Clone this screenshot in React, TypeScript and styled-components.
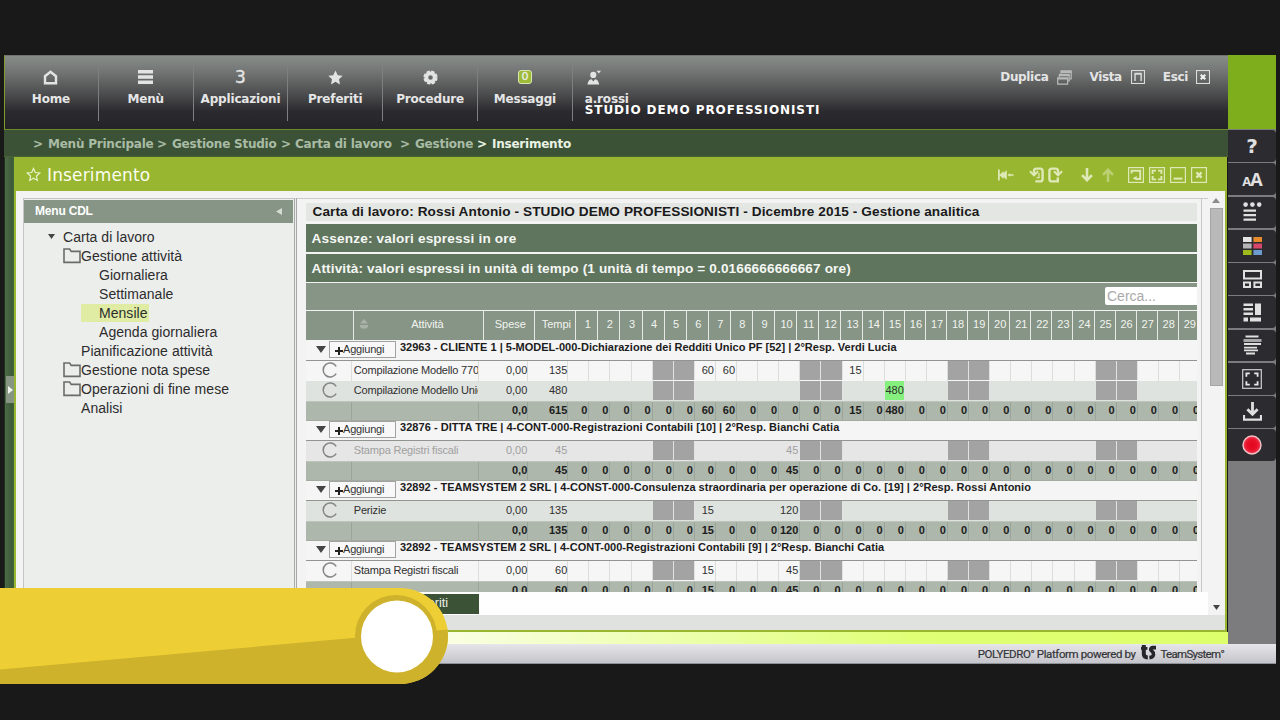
import React from "react";
import styled, { createGlobalStyle, css } from "styled-components";

const GlobalStyle = createGlobalStyle`
  * { box-sizing: border-box; }
  html, body { margin: 0; padding: 0; background: #191919; }
  body { width: 1280px; height: 720px; overflow: hidden; font-family: "Liberation Sans", Arial, sans-serif; }
  svg { display: block; flex: none; }
`;

const wide = css`font-family: "DejaVu Sans", Verdana, sans-serif;`;

const Screen = styled.div`
  position: relative;
  width: 1280px;
  height: 720px;
  padding: 55px 4px 56px 4px;
  background: #191919;
  overflow: hidden;
`;
const Frame = styled.div`
  display: flex;
  flex-direction: column;
  height: 609px;
`;
const Upper = styled.div`
  display: flex;
  height: 589px;
`;
const Workspace = styled.div`
  display: flex;
  flex-direction: column;
  width: 1224px;
`;

/* top bar */
const TopBar = styled.header`
  display: flex;
  justify-content: space-between;
  height: 75px;
  border-top: 1px solid #6f736f;
  border-bottom: 1px solid #6d8c28;
  border-left: 1px solid #7f9c2c;
  background: linear-gradient(#878c89 0%, #6f7271 24%, #4c4d4e 52%, #2b2a2e 76%, #242327 100%);
`;
const Nav = styled.nav`
  display: flex;
  margin-left: -1px;
  padding-top: 8px;
`;
const NavItem = styled.div`
  display: flex;
  flex-direction: column;
  align-items: center;
  width: 94.8px;
  height: 57px;
  padding-top: 4px;
  border-right: 1px solid #7d807e;
`;
const NavIcon = styled.div`
  display: flex;
  align-items: center;
  justify-content: center;
  height: 18px;
  color: #e3e3e3;
  ${wide}
  font-size: 17px;
  line-height: 18px;
  -webkit-text-stroke: 0.4px #e3e3e3;
`;
const NavLabel = styled.div`
  ${wide}
  margin-top: 4px;
  font-size: 12px;
  font-weight: 700;
  line-height: 18px;
  letter-spacing: -0.17px;
  color: #e6e6e6;
  white-space: nowrap;
`;
const UserBlock = styled.div`
  display: flex;
  flex-direction: column;
  padding: 4px 0 0 12px;
`;
const UserIconBox = styled.div`
  display: flex;
  align-items: center;
  height: 18px;
  padding-left: 2px;
`;
const Studio = styled.div`
  ${wide}
  margin-top: -7px;
  font-size: 12px;
  font-weight: 700;
  line-height: 18px;
  letter-spacing: 0.92px;
  color: #fff;
  white-space: nowrap;
`;
const Badge = styled.span`
  display: block;
  width: 14px;
  height: 14px;
  border: 1px solid #dbe6b4;
  border-radius: 3px;
  background: #9dbb35;
  ${wide}
  font-size: 11px;
  line-height: 12px;
  text-align: center;
  color: #f4f8e0;
`;
const WindowLinks = styled.div`
  display: flex;
  align-items: center;
  height: 18px;
  margin: 12px 18px 0 0;
`;
const WindowLink = styled.div<{ $gap: number; $ml: number }>`
  ${wide}
  display: flex;
  align-items: center;
  gap: ${(p) => p.$gap}px;
  margin-left: ${(p) => p.$ml}px;
  font-size: 12px;
  font-weight: 700;
  letter-spacing: -0.35px;
  color: #e4e4e4;
`;

/* breadcrumb */
const Crumbs = styled.div`
  ${wide}
  display: flex;
  align-items: center;
  height: 27px;
  padding: 1px 0 0 29px;
  background: #3b5236;
  border-bottom: 1px solid #486032;
  font-size: 12px;
  font-weight: 700;
  color: #a9bba5;
  white-space: pre;
`;
const Crumb = styled.span<{ $w: number; $on?: boolean }>`
  width: ${(p) => p.$w}px;
  letter-spacing: -0.23px;
  color: ${(p) => (p.$on ? "#e9f2e4" : "#a9bba5")};
`;

/* window */
const Body = styled.div`
  display: flex;
  height: 475px;
`;
const LeftStrip = styled.div`
  display: flex;
  flex-direction: column;
  width: 10px;
  padding: 219px 0 0 1px;
  border-left: 1px solid #20301f;
  background: linear-gradient(90deg, #4d6a48, #3c5a38 80%, #44653a);
`;
const Handle = styled.div`
  display: flex;
  align-items: center;
  justify-content: center;
  height: 27px;
  background: #879683;
`;
const Window = styled.section`
  display: flex;
  flex-direction: column;
  width: 1213px;
  border: 2px solid #98b62f;
  border-top: 0;
`;
const WindowTitle = styled.div`
  ${wide}
  display: flex;
  align-items: center;
  justify-content: space-between;
  height: 34px;
  padding: 1px 18px 0 10px;
  background: #98b62f;
  color: #fbfdf0;
  font-size: 17px;
`;
const TitleName = styled.div`
  display: flex;
  align-items: center;
  gap: 6px;
  letter-spacing: 0.15px;
`;
const Tools = styled.div`
  display: flex;
  align-items: center;
`;
const Tool = styled.span<{ $ml?: number; $dim?: boolean }>`
  margin-left: ${(p) => p.$ml ?? 0}px;
  opacity: ${(p) => (p.$dim ? 0.5 : 1)};
`;
const Sheet = styled.div`
  display: flex;
  height: 424px;
  padding: 7px 0 0 7px;
  background: #f2f3f2;
`;
const SheetFoot = styled.div`
  height: 15px;
  background: #e0e2e0;
`;

/* tree */
const Panel = styled.aside`
  width: 274px;
  border: 1px solid #c2c5c2;
  border-right: 3px double #a6a9a6;
  border-bottom: 0;
  padding-top: 1px;
  padding-right: 1px;
  background: #eceeec;
`;
const PanelHead = styled.div`
  display: flex;
  align-items: center;
  justify-content: space-between;
  height: 23px;
  padding: 0 11px 1px 11px;
  background: #869585;
  color: #fff;
  font-size: 12px;
  font-weight: 700;
  letter-spacing: -0.2px;
`;
const Tree = styled.div`
  display: flex;
  flex-direction: column;
  align-items: flex-start;
  padding-top: 4px;
`;
const Node = styled.div<{ $ml: number; $pl?: number; $on?: boolean }>`
  display: flex;
  align-items: center;
  height: 19px;
  margin-left: ${(p) => p.$ml}px;
  padding-left: ${(p) => p.$pl ?? 0}px;
  padding-right: 1px;
  background: ${(p) => (p.$on ? "linear-gradient(#e0eca4,#e0eca4) 0 50% / 100% 18px no-repeat" : "none")};
  font-size: 14px;
  letter-spacing: 0.04px;
  color: #2c2c2c;
  white-space: nowrap;
`;

/* main */
const Main = styled.main`
  width: 911px;
  border-top: 1px solid #c9cbc9;
  display: flex;
  flex-direction: column;
`;
const Card = styled.div`
  width: 905px;
  height: 393px;
  padding: 4px 4px 0 9px;
  border-right: 1px solid #c6c8c6;
  overflow: hidden;
`;
const Heading = styled.h1`
  margin: 0;
  height: 18px;
  padding-left: 6.5px;
  background: #e3e6e3;
  font-size: 13.6px;
  line-height: 18px;
  letter-spacing: 0.1px;
  font-weight: 700;
  color: #1a1a1a;
  white-space: nowrap;
`;
const Section = styled.h2<{ $mt: number; $ls: number }>`
  margin: ${(p) => p.$mt}px 0 0;
  height: 28px;
  padding-left: 5.5px;
  background: #5f755d;
  font-size: 13.6px;
  line-height: 29px;
  letter-spacing: ${(p) => p.$ls}px;
  font-weight: 700;
  color: #f5f7f4;
  white-space: nowrap;
`;
const SearchRow = styled.div`
  display: flex;
  justify-content: flex-end;
  align-items: center;
  height: 27px;
  margin-top: 1px;
  padding-bottom: 1px;
  background: #869585;
`;
const Search = styled.div`
  width: 92px;
  height: 18px;
  padding-left: 2px;
  border-radius: 2px 0 0 2px;
  background: #fff;
  font-size: 14px;
  line-height: 18px;
  letter-spacing: 0;
  color: #a9a9a9;
`;
const HeadRow = styled.div`
  display: grid;
  grid-template-columns: 48.3px 130px 51px 41px repeat(12, 22.08px) 21.6px repeat(16, 21.07px);
  height: 29px;
  margin-top: 1px;
  overflow: hidden;
  background: #869585;
`;
const Th = styled.div`
  display: flex;
  align-items: center;
  justify-content: center;
  border-right: 1px solid #e6eae5;
  font-size: 11px;
  padding: 0 0 3px 2px;
  color: #f2f4f1;
`;
const ThActivity = styled(Th)`
  justify-content: flex-start;
  gap: 43px;
  padding-left: 6px;
  letter-spacing: -0.1px;
`;
const Group = styled.div<{ $first?: boolean }>`
  display: flex;
  align-items: flex-start;
  height: ${(p) => (p.$first ? 21 : 20)}px;
  padding-left: 9px;
  background: #f5f5f5;
  border-bottom: 1px solid #909590;
  border-top: ${(p) => (p.$first ? "1px solid #f5f5f5" : "0")};
`;
const Caret = styled.div`
  width: 14px;
  padding: 5px 0 0 1px;
`;
const AddButton = styled.div`
  display: flex;
  align-items: center;
  width: 67px;
  height: 17px;
  padding: 0 0 2px 5px;
  border: 1px solid #a2a2a2;
  background: #f8f8f8;
  font-size: 11px;
  letter-spacing: -0.2px;
  color: #333;
`;
const PlusBox = styled.span`
  padding-top: 4px;
`;
const GroupName = styled.div<{ $ls: number }>`
  margin-left: 4px;
  font-size: 11px;
  line-height: 13px;
  letter-spacing: ${(p) => p.$ls}px;
  font-weight: 700;
  color: #1c1c1c;
  white-space: nowrap;
`;
const columns = css`
  display: grid;
  grid-template-columns: 46.3px 127px 49px 40px repeat(30, 21.1px);
  height: 20px;
  overflow: hidden;
`;
type Tone = "white" | "green" | "gray";
const toneBg = { white: "#f6f6f6", green: "#dfe3df", gray: "#e6e6e6" };
const toneLine = { white: "#dcdedc", green: "transparent", gray: "transparent" };
const Row = styled.div<{ $tone: Tone }>`
  ${columns}
  background: ${(p) => toneBg[p.$tone]};
  color: ${(p) => (p.$tone === "gray" ? "#a0a0a0" : "#303030")};
  --line: ${(p) => toneLine[p.$tone]};
`;
const Total = styled.div`
  ${columns}
  background: #aeb7ac;
  color: #1c1c1c;
  font-weight: 700;
  border-top: 1px solid #bdc5bb;
  border-bottom: 1px solid #a3aba1;
  --line: #9ba599;
`;
const Cell = styled.div`
  border-right: 1px solid var(--line);
  padding-right: 1px;
  font-size: 11px;
  line-height: 19px;
  text-align: right;
  white-space: nowrap;
`;
const SumCell = styled(Cell)`
  padding-right: 0;
`;
const TotalCell = styled(Cell)<{ $wide?: boolean }>`
  padding-right: ${(p) => (p.$wide ? 0 : 1)}px;
  line-height: 17px;
`;
const NameCell = styled(Cell)`
  padding: 0 0 0 1.5px;
  text-align: left;
  letter-spacing: -0.19px;
  overflow: hidden;
`;
const MarkCell = styled(Cell)`
  display: flex;
  align-items: center;
  padding: 0 0 2px 16px;
`;
const Weekend = styled(Cell)`
  margin-bottom: 1px;
  background: #a3a3a3;
  border-right: 1px solid #e2e2e2;
`;
const Hot = styled(Cell)`
  margin: 0 2px 1px 0;
  padding: 0;
  border: 0;
  background: #86f07f;
`;
const Actions = styled.div`
  display: flex;
  height: 23px;
  padding: 2px 0 0 70px;
  background: #fefefe;
`;
const ActionButton = styled.div`
  width: 112px;
  height: 20px;
  padding-right: 31px;
  background: #3b5236;
  color: #eef2ec;
  font-size: 12.5px;
  line-height: 19px;
  text-align: right;
`;
const Scroll = styled.div`
  display: flex;
  flex-direction: column;
  align-items: center;
  width: 16px;
  padding: 0 0 5px;
`;
const Thumb = styled.div`
  width: 13px;
  height: 178px;
  margin: 5px 0 auto;
  border: 1px solid #a5a5a5;
  background: #b9b9b9;
`;
const Glow = styled.div`
  height: 12px;
  background: linear-gradient(90deg, #ffffff 25%, #f9ffe0 37%, #dfff74 75%, #deff6c);
`;

/* right rail */
const Rail = styled.aside`
  display: flex;
  flex-direction: column;
  width: 48px;
  background: #7c7b7e;
`;
const RailTop = styled.div`
  height: 74px;
  margin-bottom: 1px;
  background: #7eae1b;
`;
const RailButtons = styled.div`
  display: grid;
  grid-template-rows: repeat(10, 1fr);
  gap: 1.5px;
  height: 331px;
`;
const RailButton = styled.div`
  display: flex;
  align-items: center;
  justify-content: center;
  border-radius: 0 4px 4px 0;
  background: #2c2b2f;
  color: #e0e0e0;
  font-size: 20px;
  font-weight: 700;
`;
const BigA = styled.span`
  display: flex;
  align-items: baseline;
  font-family: "Open Sans", sans-serif;
  font-size: 18px;
  letter-spacing: -1px;
`;
const SmallA = styled.span`
  font-size: 13px;
`;
const Help = styled.span`
  font-family: "DejaVu Sans", sans-serif;
`;

/* footer */
const Footer = styled.footer`
  display: flex;
  align-items: center;
  justify-content: flex-end;
  height: 20px;
  padding-right: 52px;
  border-bottom: 1px solid #8d9298;
  background: linear-gradient(#e6e6ea, #c4c4ca);
  font-family: Roboto, sans-serif;
  font-size: 11.5px;
  color: #343438;
`;
const FootText = styled.span<{ $ls: number }>`
  margin-top: 1px;
  letter-spacing: ${(p) => p.$ls}px;
  -webkit-text-stroke: 0.2px #343438;
`;
const LogoBox = styled.span`
  margin: 0 5px 2px 5px;
`;

const Overlay = styled.div`
  position: absolute;
  left: 0;
  top: 588px;
`;

const C = "#e3e3e3";
const L = "#dfe9b8";

const Box = ({ children, color = L, s = 16 }: { children?: React.ReactNode; color?: string; s?: number }) => (
  <svg width={s} height={s} viewBox="0 0 16 16" fill="none" stroke={color}>
    <rect x="0.6" y="0.6" width="14.8" height="14.8" strokeWidth="1.2" />
    {children}
  </svg>
);
const Corners = ({ color, a, b, w }: { color: string; a: number; b: number; w: number }) => (
  <path
    d={`M${a} ${a + 3.4}V${a}H${a + 3.4}M${b - 3.4} ${a}H${b}V${a + 3.4}M${b} ${b - 3.4}V${b}H${b - 3.4}M${a + 3.4} ${b}H${a}V${b - 3.4}`}
    stroke={color}
    strokeWidth={w}
    fill="none"
  />
);

const HomeIcon = () => (
  <svg width="15" height="15" viewBox="0 0 15 15" fill="none" stroke={C} strokeWidth="2.4">
    <path d="M2 13.2V6.2L7.5 1.8L13 6.2V13.2Z" />
  </svg>
);
const MenuIcon = () => (
  <svg width="15" height="14" viewBox="0 0 15 14" fill={C}>
    <path d="M0 0H15V3.6H0ZM0 5.2H15V8.8H0ZM0 10.4H15V14H0Z" />
  </svg>
);
const StarIcon = () => (
  <svg width="15" height="15" viewBox="0 0 15 15" fill={C}>
    <path d="M7.5 0.4L9.7 5.2L14.7 5.8L11 9.2L12 14.4L7.5 11.8L3 14.4L4 9.2L0.3 5.8L5.3 5.2Z" />
  </svg>
);
const GearIcon = () => (
  <svg width="15" height="15" viewBox="0 0 15 15" fill="none" stroke={C}>
    <circle cx="7.5" cy="7.5" r="4.2" strokeWidth="3.8" />
    <circle cx="7.5" cy="7.5" r="6.2" strokeWidth="1.8" strokeDasharray="3.4 1.47" />
  </svg>
);
const UserIcon = () => (
  <svg width="15" height="15" viewBox="0 0 15 15" fill={C}>
    <circle cx="6.3" cy="4.9" r="3.1" />
    <path d="M0.3 14.4L1.6 11Q2.4 9.4 4.6 9.2L6.3 11.4L8 9.2Q10.2 9.4 11 11L12.3 14.4Z" />
    <path d="M9.6 0.8H14L11.8 3.6Z" />
  </svg>
);
const DuplicaIcon = () => (
  <svg width="15" height="15" viewBox="0 0 15 15" fill="none" stroke="#b9bbba" strokeWidth="1.2">
    <path d="M4 3.6V0.8H14.2V9H11.6M4 2.4H14.2M4 1.4H14" />
    <path d="M2.4 7V4.4H12.2V11H11M2.4 5.6H12" />
    <path d="M0.7 7.8H10.6V14.2H0.7ZM0.7 9H10.6" />
  </svg>
);

const ToolStart = () => (
  <svg width="16" height="12" viewBox="0 0 16 12" fill={L}>
    <path d="M0 0.5H1.8V11.5H0ZM1.4 6L5.4 2V4L8.8 1.2V10.8L5.4 8V10ZM9.5 6L12 4.2V5.2H15.5V6.8H12V7.8Z" />
  </svg>
);
const ToolUndo = () => (
  <svg width="15" height="16" viewBox="0 0 15 16" fill="none" stroke={L} strokeWidth="2.4">
    <path d="M5 7.5V4Q5 1.6 7.4 1.6H11.2Q13.6 1.6 13.6 4V12Q13.6 14.4 11.2 14.4H6.4" />
    <path d="M0.9 4.2L5 8.4L9.1 4.2" strokeWidth="2" />
    <path d="M10 6V10.6H7.6" strokeWidth="1.2" />
  </svg>
);
const ToolRedo = () => (
  <svg width="15" height="16" viewBox="0 0 15 16" fill="none" stroke={L} strokeWidth="2.4">
    <path d="M10 7.5V4Q10 1.6 7.6 1.6H3.8Q1.4 1.6 1.4 4V12Q1.4 14.4 3.8 14.4H9.8V10.4" />
    <path d="M5.9 4.2L10 8.4L14.1 4.2" strokeWidth="2" />
  </svg>
);
const ToolDown = () => (
  <svg width="12" height="14" viewBox="0 0 12 14" fill="none" stroke={L} strokeWidth="2.6">
    <path d="M6 0V12M1 7.2L6 12.2L11 7.2" />
  </svg>
);
const ToolUp = () => (
  <svg width="12" height="14" viewBox="0 0 12 14" fill="none" stroke={L} strokeWidth="2.6">
    <path d="M6 14V2M1 6.8L6 1.8L11 6.8" />
  </svg>
);

const Folder = () => (
  <svg width="18" height="16" viewBox="0 0 18 16" fill="none" stroke="#6a6c6a" strokeWidth="1.6">
    <path d="M1 14.4V1H6.6L8.2 3.4H17V14.4Z" />
  </svg>
);
const Down = ({ s = 8, c = "#444" }: { s?: number; c?: string }) => (
  <svg width={s} height={s * 0.7} viewBox="0 0 10 7" fill={c}>
    <path d="M0 0H10L5 7Z" />
  </svg>
);

const RailLines = () => (
  <svg width="19" height="20" viewBox="0 0 19 20" fill="#e0e0e0">
    <circle cx="2.6" cy="2.6" r="2.3" />
    <circle cx="9.4" cy="2.6" r="2.3" />
    <circle cx="16.2" cy="2.6" r="2.3" />
    <path d="M0.5 7.4H13V9.8H0.5ZM0.5 11.9H13V14.3H0.5ZM0.5 16.4H13V18.8H0.5Z" />
  </svg>
);
const RailColors = () => (
  <svg width="19" height="18" viewBox="0 0 19 18">
    <path fill="#e4e4e4" d="M0 0H8.6V5H0Z" />
    <path fill="#e78a2c" d="M10.4 0H19V5H10.4Z" />
    <path fill="#b5b5b7" d="M0 6.5H8.6V11.5H0Z" />
    <path fill="#d6476b" d="M10.4 6.5H19V11.5H10.4Z" />
    <path fill="#9dbb1c" d="M0 13H8.6V18H0Z" />
    <path fill="#6d9bd0" d="M10.4 13H19V18H10.4Z" />
  </svg>
);
const RailLayout = () => (
  <svg width="19" height="18" viewBox="0 0 19 18" fill="none" stroke="#e0e0e0" strokeWidth="2">
    <path d="M1 1H18V8.4H1ZM1 12.4H7V17H1ZM11.4 12.4H18V17H11.4Z" />
  </svg>
);
const RailBlocks = () => (
  <svg width="19" height="19" viewBox="0 0 19 19" fill="#e0e0e0">
    <path d="M0.5 0.5H10V3H0.5ZM0.5 5H10V7.5H0.5ZM0.5 9.5H10V12H0.5ZM12 0.5H18V12H12ZM0.5 14.5H5V18.5H0.5ZM7 14.5H18V18.5H7Z" />
  </svg>
);
const RailText = () => (
  <svg width="19" height="20" viewBox="0 0 19 20" fill="#e0e0e0">
    <path d="M2.5 0.5H15.5V2.5H2.5ZM1 8H18V10H1ZM1 11.7H14V13.4H1ZM1 14.6H15V16.3H1ZM3 17.6H12V19.4H3Z" />
    <path d="M0.5 4H18.5V7H0.5Z" fill="#a8a8aa" />
  </svg>
);
const RailExpand = () => (
  <svg width="20" height="20" viewBox="0 0 20 20" fill="none">
    <rect x="0.7" y="0.7" width="18.6" height="18.6" stroke="#d0d0d0" strokeWidth="1.2" />
    <Corners color="#e8e8e8" a={4.4} b={15.6} w={1.8} />
  </svg>
);
const RailDownload = () => (
  <svg width="19" height="19" viewBox="0 0 19 19" fill="none" stroke="#e0e0e0">
    <path d="M9.5 0V11.5M4.4 7.2L9.5 12.2L14.6 7.2" strokeWidth="2.8" />
    <path d="M1 13V17.6H18V13" strokeWidth="2.2" />
  </svg>
);
const RailRecord = () => (
  <svg width="20" height="20" viewBox="0 0 20 20">
    <defs>
      <radialGradient id="rec">
        <stop offset="0" stopColor="#e0061c" />
        <stop offset="0.6" stopColor="#e8112a" />
        <stop offset="1" stopColor="#f4405a" />
      </radialGradient>
    </defs>
    <circle cx="10" cy="10" r="9" fill="url(#rec)" stroke="#f0c4c8" strokeWidth="1.4" />
  </svg>
);

const navItems: { label: string; icon: React.ReactNode }[] = [
  { label: "Home", icon: <HomeIcon /> },
  { label: "Menù", icon: <MenuIcon /> },
  { label: "Applicazioni", icon: "3" },
  { label: "Preferiti", icon: <StarIcon /> },
  { label: "Procedure", icon: <GearIcon /> },
  { label: "Messaggi", icon: <Badge>0</Badge> },
];

const DAYS = Array.from({ length: 30 }, (_, i) => i + 1);
const WEEKEND = [5, 6, 12, 13, 19, 20, 26, 27];
type Values = Record<number, number>;

interface Line {
  name: string;
  tempi: number;
  tone: Tone;
  values: Values;
  hot?: number;
}
interface GroupData {
  title: string;
  ls: number;
  lines: Line[];
  total: number;
  sums: Values;
}

const groups: GroupData[] = [
  {
    title: "32963 - CLIENTE 1 | 5-MODEL-000-Dichiarazione dei Redditi Unico PF [52] | 2°Resp. Verdi Lucia",
    ls: 0,
    lines: [
      { name: "Compilazione Modello 770", tempi: 135, tone: "white", values: { 7: 60, 8: 60, 14: 15 } },
      { name: "Compilazione Modello Unico", tempi: 480, tone: "green", values: { 16: 480 }, hot: 16 },
    ],
    total: 615,
    sums: { 7: 60, 8: 60, 14: 15, 16: 480 },
  },
  {
    title: "32876 - DITTA TRE | 4-CONT-000-Registrazioni Contabili [10] | 2°Resp. Bianchi Catia",
    ls: 0.04,
    lines: [{ name: "Stampa Registri fiscali", tempi: 45, tone: "gray", values: { 11: 45 } }],
    total: 45,
    sums: { 11: 45 },
  },
  {
    title: "32892 - TEAMSYSTEM 2 SRL | 4-CONST-000-Consulenza straordinaria per operazione di Co. [19] | 2°Resp. Rossi Antonio",
    ls: 0.01,
    lines: [{ name: "Perizie", tempi: 135, tone: "green", values: { 7: 15, 11: 120 } }],
    total: 135,
    sums: { 7: 15, 11: 120 },
  },
  {
    title: "32892 - TEAMSYSTEM 2 SRL | 4-CONT-000-Registrazioni Contabili [9] | 2°Resp. Bianchi Catia",
    ls: 0,
    lines: [{ name: "Stampa Registri fiscali", tempi: 60, tone: "white", values: { 7: 15, 11: 45 } }],
    total: 60,
    sums: { 7: 15, 11: 45 },
  },
];

const LineRow = ({ line }: { line: Line }) => (
  <Row $tone={line.tone}>
    <MarkCell>
      <svg width="16" height="16" viewBox="0 0 16 16" fill="none" stroke="#858585" strokeWidth="1.5">
        <path d="M14.2 4.4A7 7 0 1 0 14.2 11.6" />
      </svg>
    </MarkCell>
    <NameCell>{line.name}</NameCell>
    <SumCell>0,00</SumCell>
    <SumCell>{line.tempi}</SumCell>
    {DAYS.map((d) => {
      if (WEEKEND.includes(d)) return <Weekend key={d} />;
      if (line.hot === d) return <Hot key={d}>{line.values[d]}</Hot>;
      return <Cell key={d}>{line.values[d] ?? ""}</Cell>;
    })}
  </Row>
);

const GroupBlock = ({ group, first }: { group: GroupData; first: boolean }) => (
  <>
    <Group $first={first}>
      <Caret>
        <Down s={10} />
      </Caret>
      <AddButton>
        <PlusBox>
          <svg width="8" height="8" viewBox="0 0 8 8" fill="#222">
            <path d="M3 0H5V3H8V5H5V8H3V5H0V3H3Z" />
          </svg>
        </PlusBox>
        Aggiungi
      </AddButton>
      <GroupName $ls={group.ls}>{group.title}</GroupName>
    </Group>
    {group.lines.map((l) => (
      <LineRow key={l.name} line={l} />
    ))}
    <Total>
      <TotalCell />
      <TotalCell />
      <TotalCell $wide>0,0</TotalCell>
      <TotalCell $wide>{group.total}</TotalCell>
      {DAYS.map((d) => (
        <TotalCell key={d}>{group.sums[d] ?? 0}</TotalCell>
      ))}
    </Total>
  </>
);

const Cross = ({ color }: { color: string }) => <path d="M5.4 5.4L10.6 10.6M10.6 5.4L5.4 10.6" stroke={color} strokeWidth="2.4" />;

export default function App() {
  return (
    <Screen>
      <GlobalStyle />
      <Frame>
        <Upper>
          <Workspace>
            <TopBar>
              <Nav>
                {navItems.map((n) => (
                  <NavItem key={n.label}>
                    <NavIcon>{n.icon}</NavIcon>
                    <NavLabel>{n.label}</NavLabel>
                  </NavItem>
                ))}
                <UserBlock>
                  <UserIconBox>
                    <UserIcon />
                  </UserIconBox>
                  <NavLabel>a.rossi</NavLabel>
                  <Studio>STUDIO DEMO PROFESSIONISTI</Studio>
                </UserBlock>
              </Nav>
              <WindowLinks>
                <WindowLink $gap={9} $ml={0}>
                  Duplica
                  <DuplicaIcon />
                </WindowLink>
                <WindowLink $gap={9} $ml={17}>
                  Vista
                  <Box color="#dcdcdc" s={14}>
                    <path d="M4.6 12.5V4.6H11.6V12.5M4 4H12" strokeWidth="1.6" />
                  </Box>
                </WindowLink>
                <WindowLink $gap={8} $ml={18}>
                  Esci
                  <Box color="#dcdcdc" s={14}>
                    <Cross color="#f0f0f0" />
                  </Box>
                </WindowLink>
              </WindowLinks>
            </TopBar>
            <Crumbs>
              <Crumb $w={15}>&gt;</Crumb>
              <Crumb $w={109}>Menù Principale</Crumb>
              <Crumb $w={15}>&gt;</Crumb>
              <Crumb $w={109}>Gestione Studio</Crumb>
              <Crumb $w={14}>&gt;</Crumb>
              <Crumb $w={105}>Carta di lavoro</Crumb>
              <Crumb $w={15}>&gt;</Crumb>
              <Crumb $w={62}>Gestione</Crumb>
              <Crumb $w={15} $on>&gt;</Crumb>
              <Crumb $w={100} $on>Inserimento</Crumb>
            </Crumbs>
            <Body>
              <LeftStrip>
                <Handle>
                  <svg width="5" height="8" viewBox="0 0 5 8" fill="#f0f3ee">
                    <path d="M0 0L5 4L0 8Z" />
                  </svg>
                </Handle>
              </LeftStrip>
              <Window>
                <WindowTitle>
                  <TitleName>
                    <svg width="15" height="15" viewBox="0 0 15 15" fill="none" stroke="#e9f2c8" strokeWidth="1.2">
                      <path d="M7.5 1.4L9.3 5.5L13.7 6L10.4 9L11.3 13.4L7.5 11.2L3.7 13.4L4.6 9L1.3 6L5.7 5.5Z" />
                    </svg>
                    Inserimento
                  </TitleName>
                  <Tools>
                    <Tool><ToolStart /></Tool>
                    <Tool $ml={15}><ToolUndo /></Tool>
                    <Tool $ml={4}><ToolRedo /></Tool>
                    <Tool $ml={18}><ToolDown /></Tool>
                    <Tool $ml={9} $dim><ToolUp /></Tool>
                    <Tool $ml={14}>
                      <Box>
                        <path d="M3.6 6.4V3.8H12.2V12H8.6" strokeWidth="1.9" />
                        <path d="M8.8 9V13.6L4.6 11.3Z" fill={L} stroke="none" />
                      </Box>
                    </Tool>
                    <Tool $ml={5}>
                      <Box>
                        <Corners color={L} a={3.6} b={12.4} w={1.9} />
                      </Box>
                    </Tool>
                    <Tool $ml={5}>
                      <Box>
                        <path d="M3.6 11.6H12.4" strokeWidth="2" />
                      </Box>
                    </Tool>
                    <Tool $ml={5}>
                      <Box>
                        <Cross color={L} />
                      </Box>
                    </Tool>
                  </Tools>
                </WindowTitle>
                <Sheet>
                  <Panel>
                    <PanelHead>
                      Menu CDL
                      <svg width="6" height="7" viewBox="0 0 6 7" fill="#d5dcd2">
                        <path d="M6 0V7L0 3.5Z" />
                      </svg>
                    </PanelHead>
                    <Tree>
                      <Node $ml={24}>
                        <Down s={7} />
                        <Node $ml={8}>Carta di lavoro</Node>
                      </Node>
                      <Node $ml={39}><Folder />Gestione attività</Node>
                      <Node $ml={75}>Giornaliera</Node>
                      <Node $ml={75}>Settimanale</Node>
                      <Node $ml={57} $pl={18} $on>Mensile</Node>
                      <Node $ml={75}>Agenda giornaliera</Node>
                      <Node $ml={57}>Pianificazione attività</Node>
                      <Node $ml={39}><Folder />Gestione nota spese</Node>
                      <Node $ml={39}><Folder />Operazioni di fine mese</Node>
                      <Node $ml={57}>Analisi</Node>
                    </Tree>
                  </Panel>
                  <Main>
                    <Card>
                      <Heading>Carta di lavoro: Rossi Antonio - STUDIO DEMO PROFESSIONISTI - Dicembre 2015 - Gestione analitica</Heading>
                      <Section $mt={3} $ls={0.18}>Assenze: valori espressi in ore</Section>
                      <Section $mt={2} $ls={0.12}>Attività: valori espressi in unità di tempo (1 unità di tempo = 0.0166666666667 ore)</Section>
                      <SearchRow>
                        <Search>Cerca...</Search>
                      </SearchRow>
                      <HeadRow>
                        <Th />
                        <ThActivity>
                          <svg width="8" height="10" viewBox="0 0 8 10" fill="#a9b3a7">
                            <path d="M4 0L8 4.5H0ZM0 6H8V7.5L6.5 9.5H1.5L0 7.5Z" />
                          </svg>
                          Attività
                        </ThActivity>
                        <Th>Spese</Th>
                        <Th>Tempi</Th>
                        {DAYS.slice(0, 29).map((d) => (
                          <Th key={d}>{d}</Th>
                        ))}
                      </HeadRow>
                      {groups.map((g, i) => (
                        <GroupBlock key={g.title} group={g} first={i === 0} />
                      ))}
                    </Card>
                    <Actions>
                      <ActionButton>Preferiti</ActionButton>
                    </Actions>
                  </Main>
                  <Scroll>
                    <svg width="8" height="5" viewBox="0 0 8 5" fill="#8b8b8b">
                      <path d="M4 0L8 5H0Z" />
                    </svg>
                    <Thumb />
                    <Down s={7} />
                  </Scroll>
                </Sheet>
                <SheetFoot />
              </Window>
            </Body>
            <Glow />
          </Workspace>
          <Rail>
            <RailTop />
            <RailButtons>
              <RailButton><Help>?</Help></RailButton>
              <RailButton><BigA><SmallA>A</SmallA>A</BigA></RailButton>
              <RailButton><RailLines /></RailButton>
              <RailButton><RailColors /></RailButton>
              <RailButton><RailLayout /></RailButton>
              <RailButton><RailBlocks /></RailButton>
              <RailButton><RailText /></RailButton>
              <RailButton><RailExpand /></RailButton>
              <RailButton><RailDownload /></RailButton>
              <RailButton><RailRecord /></RailButton>
            </RailButtons>
          </Rail>
        </Upper>
        <Footer>
          <FootText $ls={-0.4}>POLYEDRO° Platform powered by</FootText>
          <LogoBox>
            <svg width="15" height="15" viewBox="0 0 15 15" fill="none" stroke="#26262a" strokeWidth="4">
              <path d="M2.8 0V9Q2.8 12.4 6.8 12.4" />
              <path d="M0 3.4H6.4" strokeWidth="2.8" />
              <path d="M15 2.6H11.6Q9.4 2.8 9.8 5L12.2 7.6Q13.6 12 8.4 12.6" strokeWidth="3.6" />
            </svg>
          </LogoBox>
          <FootText $ls={-0.7}>TeamSystem°</FootText>
        </Footer>
      </Frame>
      <Overlay>
        <svg width="448" height="96" viewBox="0 0 448 96">
          <defs>
            <clipPath id="pill">
              <path d="M0 0H400A48 48 0 0 1 400 96H0Z" />
            </clipPath>
          </defs>
          <g clipPath="url(#pill)">
            <rect width="448" height="96" fill="#edcf35" />
            <path d="M0 81.5L448 41.5V96H0Z" fill="#cfb22c" />
            <circle cx="396" cy="48" r="41" fill="#cfb22c" />
            <circle cx="397" cy="48.4" r="36" fill="#fff" />
          </g>
        </svg>
      </Overlay>
    </Screen>
  );
}
